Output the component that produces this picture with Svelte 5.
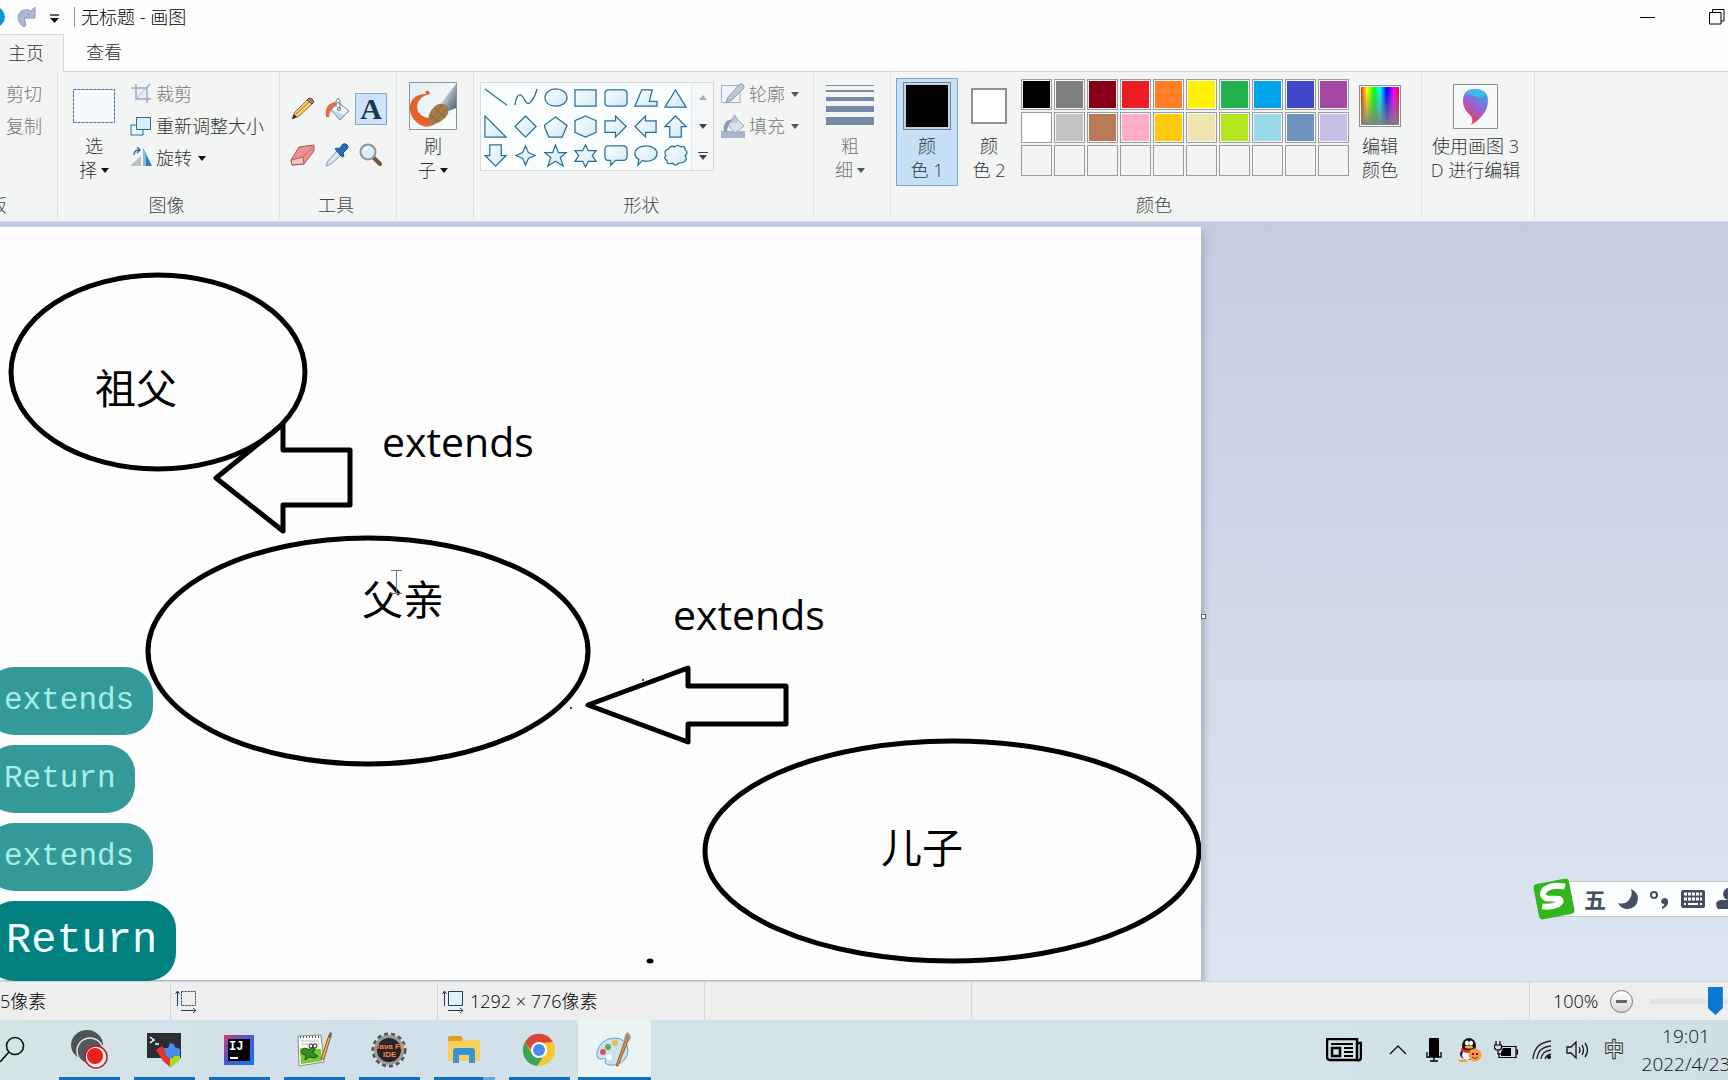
<script>
  let activeTab = $state('主页');
  let activeTool = $state('text');
  let zoom = $state(50);

  const tabs = ['主页', '查看'];

  const palette = [
    '#000000', '#7f7f7f', '#880015', '#ed1c24', '#ff7f27', '#fff200', '#22b14c', '#00a2e8', '#3f48cc', '#a349a4',
    '#ffffff', '#c3c3c3', '#b97a57', '#ffaec9', '#ffc90e', '#efe4b0', '#b5e61d', '#99d9ea', '#7092be', '#c8bfe7',
    '', '', '', '', '', '', '', '', '', ''
  ];

  const shapes = [
    { name: '直线', d: 'M1 3L24 20' },
    { name: '曲线', d: 'M1 20C2 12 5 6 9 11C12 16 14 21 18 16C22 11 23 8 24 3' },
    { name: '椭圆形', d: 'M12 3C19 3 24 7 24 12S19 21 12 21S1 17 1 12S6 3 12 3Z' },
    { name: '矩形', d: 'M1 4H23V21H1Z' },
    { name: '圆角矩形', d: 'M5 4H20Q24 4 24 8V17Q24 21 20 21H5Q1 21 1 17V8Q1 4 5 4Z' },
    { name: '多边形', d: 'M8 4H19L16 16H24V21H1Z' },
    { name: '三角形', d: 'M12 4L23 22H1Z' },
    { name: '直角三角形', d: 'M1 1V23H23Z' },
    { name: '菱形', d: 'M12 1L23 12L12 23L1 12Z' },
    { name: '五边形', d: 'M12 2L24 11L19 23H5L0 11Z' },
    { name: '六边形', d: 'M12 1L23 6V18L12 23L1 18V6Z' },
    { name: '右箭头', d: 'M1 6H12V1L23 12L12 23V18H1Z' },
    { name: '左箭头', d: 'M23 6H12V1L1 12L12 23V18H23Z' },
    { name: '向上箭头', d: 'M12 1L23 12H18V23H6V12H1Z' },
    { name: '向下箭头', d: 'M6 1H18V12H23L12 23L1 12H6Z' },
    { name: '四角星形', d: 'M12 2L15 9L22 12L15 15L12 22L9 15L2 12L9 9Z' },
    { name: '五角星形', d: 'M12 1L15 9H23L17 14L20 23L12 18L4 23L7 14L1 9H9Z' },
    { name: '六角星形', d: 'M12 1L15 7H23L19 12L23 18H15L12 24L9 18H1L5 12L1 7H9Z' },
    { name: '圆角矩形标注', d: 'M4 2H20Q24 2 24 6V13Q24 17 20 17H12L7 22V17H4Q1 17 1 13V6Q1 2 4 2Z' },
    { name: '椭圆形标注', d: 'M13 2C19 2 24 5 24 10S19 18 13 18Q11 18 9 17L4 22L5 16Q1 14 1 10C1 5 6 2 13 2Z' },
    { name: '云形标注', d: 'M5 5Q7 1 11 3Q14 0 17 3Q22 1 22 6Q26 9 22 12Q25 17 20 19Q16 20 15 20Q12 24 9 20Q3 22 3 17Q-1 15 2 12Q-1 6 5 5Z' }
  ];

  const ellipses = [
    { cx: 158, cy: 372, rx: 147, ry: 97 },
    { cx: 368, cy: 651, rx: 220, ry: 113 },
    { cx: 952, cy: 851, rx: 247, ry: 110 }
  ];

  const arrows = [
    'M216 478L283 424V450H350V505H283V531Z',
    'M588 705L688 668V686H786V724H688V742Z'
  ];

  const words = [
    { text: '祖父', x: 95, y: 404 },
    { text: 'extends', x: 382, y: 457 },
    { text: '父亲', x: 362, y: 615 },
    { text: 'extends', x: 673, y: 630 },
    { text: '儿子', x: 881, y: 863 }
  ];

  const keys = ['extends', 'Return', 'extends', 'Return'];
  const apps = ['录屏', '终端', 'IntelliJ IDEA', 'Notepad++', 'JavaFF IDE', '文件资源管理器', 'Chrome', '画图'];
</script>

<div class="window">
  <header class="titlebar">
    <svg class="save" width="5" height="20" viewBox="0 0 5 20"><circle cx="-5" cy="10" r="10" fill="#1492d8" /></svg>
    <button class="plain redo" aria-label="重做">
      <svg width="20" height="22" viewBox="0 0 20 22">
        <path d="M7 21C-1 16 -1 5 8 4Q11 3 14 5L18 1V12H8L12 8Q5 8 9 19Z" fill="#a9b9d4" stroke="#8b9bb8" />
      </svg>
    </button>
    <button class="plain more" aria-label="自定义快速访问工具栏">
      <svg width="11" height="10" viewBox="0 0 11 10"><path d="M1 1H10" stroke="#222" stroke-width="1.4" /><path d="M1 4H10L5.500 9Z" fill="#111" /></svg>
    </button>
    <h1>无标题 - 画图</h1>
    <div class="winbtns">
      <button class="plain" aria-label="最小化">
        <svg width="16" height="16" viewBox="0 0 16 16"><path d="M0 8.500H15" stroke="#000" /></svg>
      </button>
      <button class="plain" aria-label="还原">
        <svg width="16" height="16" viewBox="0 0 16 16" fill="none" stroke="#000"><path d="M.5 3.500H12V15H.5ZM3.500 3V.5H15V12H12" /></svg>
      </button>
    </div>
  </header>

  <nav class="tabs">
    {#each tabs as tab}
      <button class="tab" class:active={activeTab === tab} onclick={() => (activeTab = tab)}>{tab}</button>
    {/each}
  </nav>

  <section class="ribbon">
    <!-- Clipboard, partly off the left edge -->
    <div class="group clipboard">
      <div class="body rows">
        <button class="row off">剪切</button>
        <button class="row off">复制</button>
      </div>
      <div class="label">板</div>
    </div>

    <div class="group image">
      <div class="body">
        <button class="big">
          <span class="pic"><svg width="42" height="34" viewBox="0 0 42 34"><path d="M.5 .5H41.500V33.500H.5Z" fill="#f6faff" stroke="#3f6ea5" stroke-dasharray="3 1" /></svg></span>
          <span>选</span><span>择<i class="caret"></i></span>
        </button>
        <div class="rows">
          <button class="row off">
            <svg width="22" height="22" viewBox="0 0 22 22" fill="none" stroke="#9aaac6"><path d="M1 5H17V20M6 1V16H21M6 16L20 1" stroke-width="1.500" /><path d="M7 6H16V15H7Z" fill="#dfe8f6" stroke="none" opacity=".6" /></svg>
            裁剪
          </button>
          <button class="row">
            <svg width="22" height="22" viewBox="0 0 22 22" stroke="#2b6a94"><path d="M1 10H13V20H1Z" fill="#e3f6fd" /><path d="M6.500 2.500H20.500V14.500H6.500Z" fill="#d5f0fb" /></svg>
            重新调整大小
          </button>
          <button class="row">
            <svg width="22" height="22" viewBox="0 0 22 22"><path d="M0 19H11V9Z" fill="#bcbfc2" /><path d="M13 1V19H22Z" fill="#2d7db8" /><path d="M13 1V19H16V8Z" fill="#7dbbe0" /><path d="M4 8Q4 3 9 3M7 0L10 3L7 6" fill="none" stroke="#2f75ae" stroke-width="1.500" /></svg>
            旋转<i class="caret"></i>
          </button>
        </div>
      </div>
      <div class="label">图像</div>
    </div>

    <div class="group tools">
      <div class="body toolgrid">
        <button class="tool" class:active={activeTool === 'pencil'} onclick={() => (activeTool = 'pencil')} aria-label="铅笔">
          <svg width="24" height="24" viewBox="0 0 24 24"><path d="M1 22L4 15L17 2L22 6L8 19Z" fill="#f8ce72" stroke="#8a6a35" /><path d="M1 22L3 17L6 20Z" fill="#333" /><path d="M16 3L18 1Q22 1 23 5L21 7Z" fill="#bd7070" stroke="#6b4848" /><path d="M5 17L18 5" stroke="#a4742f" /></svg>
        </button>
        <button class="tool" class:active={activeTool === 'fill'} onclick={() => (activeTool = 'fill')} aria-label="用颜色填充">
          <svg width="26" height="24" viewBox="0 0 26 24"><path d="M2 20Q0 7 11 5L13 9Q6 10 5 20Z" fill="#e56b41" /><path d="M14 5L25 14L16 23L7 13Z" fill="#b9d5ef" stroke="#7690ae" /><path d="M14 6L24 14L20 18Q13 15 8 13Z" fill="#eef6fd" /><path d="M12 10V4Q14 -1 16 4V11" fill="none" stroke="#777" /><circle cx="15" cy="12" r="1.500" fill="#fff" stroke="#666" /></svg>
        </button>
        <button class="tool letter" class:active={activeTool === 'text'} onclick={() => (activeTool = 'text')} aria-label="文本">A</button>
        <button class="tool" class:active={activeTool === 'eraser'} onclick={() => (activeTool = 'eraser')} aria-label="橡皮擦">
          <svg width="26" height="24" viewBox="0 0 26 24"><path d="M1 17L9 4L24 2L24 8L14 21L2 22Z" fill="#ee8f91" stroke="#a9585c" /><path d="M1 17L13 14L14 21L2 22Z" fill="#f9c3b8" stroke="#a9585c" /><path d="M13 14L24 3" stroke="#c0696d" /></svg>
        </button>
        <button class="tool" class:active={activeTool === 'picker'} onclick={() => (activeTool = 'picker')} aria-label="颜色选取器">
          <svg width="24" height="24" viewBox="0 0 24 24"><path d="M1 23L3 18L12 8L16 12L6 21Z" fill="#d8e7f2" stroke="#8294a5" /><path d="M10 6L12 5L14 6L18 1Q23 0 23 5L18 10L19 13L17 14Z" fill="#2370b8" stroke="#195187" /></svg>
        </button>
        <button class="tool" class:active={activeTool === 'zoom'} onclick={() => (activeTool = 'zoom')} aria-label="放大镜">
          <svg width="24" height="24" viewBox="0 0 24 24"><path d="M14 14L21 21" stroke="#7a5638" stroke-width="4" stroke-linecap="round" /><circle cx="9" cy="9" r="7.500" fill="#dceefd" stroke="#8f9499" stroke-width="2" /><path d="M5 8Q6 5 9 5" stroke="#fff" stroke-width="2" fill="none" /></svg>
        </button>
      </div>
      <div class="label">工具</div>
    </div>

    <div class="group narrow">
      <div class="body">
        <button class="big">
          <span class="pic">
            <svg width="48" height="48" viewBox="0 0 48 48">
              <defs>
                <linearGradient id="paper" x1="0" y1="0" x2="1" y2="1"><stop offset="0" stop-color="#e3eef4" /><stop offset="1" stop-color="#fbfdfd" /></linearGradient>
                <linearGradient id="metal" x1="0" y1="0" x2="1" y2="1"><stop offset=".2" stop-color="#f4f7f9" /><stop offset=".6" stop-color="#8b9cac" /><stop offset="1" stop-color="#4d5f72" /></linearGradient>
              </defs>
              <path d="M.5 .5H47.500V47.500H.5Z" fill="url(#paper)" stroke="#8f9599" />
              <path d="M47 2L32 21L40 29L47 26Z" fill="url(#metal)" />
              <path d="M20 9Q15 8 17 12Q3 12 1 24Q0 38 14 44Q20 46 26 42Q27 36 20 36Q8 34 8 24Q10 14 21 12Z" fill="#e8602a" />
              <path d="M20 43Q17 32 26 24Q32 19 38 24Q42 30 36 36Q30 42 20 43Z" fill="#a87a48" />
              <path d="M22 38L33 23M26 40L38 26M20 33L30 40M25 26L36 35" stroke="#7e5a34" stroke-width=".7" />
            </svg>
          </span>
          <span>刷</span><span>子<i class="caret"></i></span>
        </button>
      </div>
      <div class="label"></div>
    </div>

    <div class="group shapes">
      <div class="body">
        <div class="gallery">
          <div class="cells">
            {#each shapes as shape}
              <button class="plain" aria-label={shape.name}>
                <svg width="24" height="24" viewBox="0 0 25 25"><path d={shape.d} fill={shape.d.endsWith('Z') ? 'url(#ice)' : 'none'} stroke="#2c6f95" stroke-width="1.300" /></svg>
              </button>
            {/each}
          </div>
          <div class="scroll">
            <button class="plain" aria-label="向上滚动"><svg width="8" height="5" viewBox="0 0 8 5"><path d="M0 5H8L4 0Z" fill="#a9aeb8" /></svg></button>
            <button class="plain" aria-label="向下滚动"><svg width="8" height="5" viewBox="0 0 8 5"><path d="M0 0H8L4 5Z" fill="#3d4457" /></svg></button>
            <button class="plain" aria-label="其他形状"><svg width="10" height="8" viewBox="0 0 10 8"><path d="M0 0H10V1H0ZM1 3H9L5 8Z" fill="#3d4457" /></svg></button>
          </div>
        </div>
        <div class="rows">
          <button class="row off">
            <svg width="24" height="22" viewBox="0 0 24 22"><path d="M.5 2.500H19V19.500H.5Z" fill="#f2f5fb" stroke="#a6aec2" /><path d="M5 20L7 14L19 1Q23 0 23 5L11 17Z" fill="#bcc8de" stroke="#8d9ab5" /></svg>
            轮廓<i class="caret"></i>
          </button>
          <button class="row off">
            <svg width="24" height="24" viewBox="0 0 24 24"><path d="M0 17H24V24H0Z" fill="#a8b4cc" /><path d="M3 18Q1 7 11 5L12 9Q6 10 6 18Z" fill="#8c9ab6" /><path d="M14 3L23 12L14 19L7 11Z" fill="#dae2f0" stroke="#94a2bd" /><path d="M12 9V3Q14 -1 15 3V9" fill="none" stroke="#94a2bd" /></svg>
            填充<i class="caret"></i>
          </button>
        </div>
      </div>
      <div class="label">形状</div>
    </div>

    <div class="group narrow">
      <div class="body">
        <button class="big off">
          <span class="pic"><svg width="48" height="44" viewBox="0 0 48 44"><path d="M0 1H48V2H0ZM0 6H48V8H0ZM0 13H48V17H0ZM0 22H48V28H0ZM0 33H48V41H0Z" fill="#768ba8" /></svg></span>
          <span>粗</span><span>细<i class="caret"></i></span>
        </button>
      </div>
      <div class="label"></div>
    </div>

    <div class="group colors">
      <div class="body">
        <button class="big chosen">
          <span class="pic"><span class="swatch one"></span></span>
          <span>颜</span><span>色 1</span>
        </button>
        <button class="big">
          <span class="pic"><span class="swatch two"></span></span>
          <span>颜</span><span>色 2</span>
        </button>
        <div class="palette">
          {#each palette as color, i}
            <button class="chip" class:empty={!color} style:background-color={color || null} aria-label="颜色 {i + 1}"></button>
          {/each}
        </div>
        <button class="big edit">
          <span class="pic"><span class="spectrum"></span></span>
          <span>编辑</span><span>颜色</span>
        </button>
      </div>
      <div class="label">颜色</div>
    </div>

    <div class="group paint3d">
      <div class="body">
        <button class="big">
          <span class="pic">
            <svg width="45" height="45" viewBox="0 0 45 45">
              <path d="M.5 .5H44.500V44.500H.5Z" fill="#f7f8f9" stroke="#8c9094" />
              <path d="M18 41Q21 35 17 31Q10 25 10 17Q10 5 22 5Q35 5 35 17Q35 25 29 32Q24 38 18 41Z" fill="url(#drop)" />
              <path d="M12 12Q15 5 22 5Q30 5 33 11Q27 16 21 12Q16 9 12 12Z" fill="#35c9ee" opacity=".8" />
            </svg>
          </span>
          <span>使用画图 3</span><span>D 进行编辑</span>
        </button>
      </div>
      <div class="label"></div>
    </div>
  </section>

  <main class="workspace">
    <svg class="canvas" width="1201" height="753" viewBox="0 227 1201 753">
      <defs>
        <linearGradient id="ice" x1="0" y1="0" x2="1" y2="1"><stop offset="0" stop-color="#fbfeff" /><stop offset="1" stop-color="#cfe9f5" /></linearGradient>
        <linearGradient id="drop" x1="0" y1="1" x2=".6" y2="0">
          <stop offset="0" stop-color="#f7b733" /><stop offset=".25" stop-color="#e2425c" /><stop offset=".55" stop-color="#a45bd0" /><stop offset="1" stop-color="#3f9be8" />
        </linearGradient>
      </defs>
      <g fill="none" stroke="#000" stroke-width="5">
        {#each ellipses as e}
          <ellipse cx={e.cx} cy={e.cy} rx={e.rx} ry={e.ry} />
        {/each}
        {#each arrows as d}
          <path {d} stroke-linejoin="round" />
        {/each}
      </g>
      {#each words as word}
        <text x={word.x} y={word.y}>{word.text}</text>
      {/each}
      <ellipse cx="650" cy="961" rx="3.500" ry="2.500" />
      <path d="M570 707h2v2h-2zM642 679h2v2h-2z" fill="#444" />
      <path d="M391 570.500H402M391 593.500H402M396.500 570V594" stroke="#777" fill="none" />
    </svg>
    <span class="handle"></span>

    <div class="keys">
      {#each keys as key, i}
        <span class="key" class:latest={i === keys.length - 1}>{key}</span>
      {/each}
    </div>

    <div class="ime">
      <svg class="sogou" width="44" height="44" viewBox="0 0 44 44">
        <g transform="rotate(-11 22 22)"><rect x="4" y="4" width="36" height="36" rx="4" fill="#33b51e" /><path d="M35 12Q24 7 15 11Q9 16 15 20L27 23Q30 26 25 28Q17 30 9 27" fill="none" stroke="#fff" stroke-width="6" /></g>
      </svg>
      <button class="plain wubi">五</button>
      <button class="plain" aria-label="半角"><svg width="22" height="22" viewBox="0 0 22 22"><path d="M14 1Q21 4 21 11Q20 20 11 21Q4 21 1 15Q8 17 12 12Q16 7 14 1Z" fill="#454f63" /></svg></button>
      <button class="plain" aria-label="中文标点"><svg width="20" height="22" viewBox="0 0 20 22"><circle cx="4" cy="7" r="3" fill="none" stroke="#454f63" stroke-width="2" /><path d="M15 10Q19 11 18 15Q17 19 12 21V19Q15 17 14 16Q11 16 11 13Q12 10 15 10Z" fill="#454f63" /></svg></button>
      <button class="plain" aria-label="软键盘"><svg width="24" height="18" viewBox="0 0 24 18"><rect width="24" height="18" rx="2" fill="#454f63" /><path d="M3 4H21M3 9H21" stroke="#fff" stroke-width="3" stroke-dasharray="3 1" /><path d="M3 14H5M7 14H17M19 14H21" stroke="#fff" stroke-width="2" /></svg></button>
      <button class="plain" aria-label="账户"><svg width="24" height="22" viewBox="0 0 24 22"><circle cx="13" cy="6" r="6" fill="#454f63" /><path d="M0 15Q3 11 8 12L22 12V21H2Q0 19 0 15Z" fill="#454f63" /></svg></button>
    </div>
  </main>

  <footer class="status">
    <div class="cell cursor">5像素</div>
    <div class="cell selection">
      <svg width="22" height="26" viewBox="0 0 22 26" fill="none" stroke="#24415f"><path d="M6.500 3.500H20.500V17.500H6.500Z" stroke-dasharray="2 1" /><path d="M2.500 18V3M.5 6L2.500 3L4.500 6M6 22.500H21M18 20L21 22.500L18 25" /></svg>
    </div>
    <div class="cell size">
      <svg width="22" height="26" viewBox="0 0 22 26" fill="none" stroke="#24415f"><path d="M6.500 3.500H20.500V17.500H6.500Z" fill="#e0f3fb" /><path d="M2.500 18V3M.5 6L2.500 3L4.500 6M6 22.500H21M18 20L21 22.500L18 25" /></svg>
      1292 × 776像素
    </div>
    <div class="cell disk"></div>
    <div class="cell spare"></div>
    <div class="cell zoom">
      <label for="zoom">100%</label>
      <button class="minus" aria-label="缩小" onclick={() => (zoom -= 10)}></button>
      <input id="zoom" type="range" min="0" max="100" bind:value={zoom} />
    </div>
  </footer>

  <div class="taskbar">
    <button class="plain search" aria-label="搜索">
      <svg width="26" height="28" viewBox="0 0 26 28" fill="none" stroke="#111" stroke-width="1.600"><circle cx="15" cy="10" r="8.500" /><path d="M9 16L0 26" /></svg>
    </button>
    {#each apps as app, i}
      <button class="app" class:current={i === 7} class:multi={i === 5} aria-label={app}>
        {#if i === 0}
          <svg width="38" height="46" viewBox="0 0 38 46"><ellipse cx="17" cy="18" rx="16" ry="15" fill="#4f5357" /><circle cx="20" cy="24" r="13" fill="#55595d" stroke="#e3e6e8" stroke-width="1.500" /><circle cx="26" cy="30" r="11" fill="#f5eeee" stroke="#b3202a" stroke-width="1.500" /><circle cx="25" cy="29" r="8" fill="#e9201f" /></svg>
        {:else if i === 1}
          <svg width="36" height="36" viewBox="0 0 36 36"><path d="M1 1H35V26H1Z" fill="#2b2d31" /><path d="M4 5L8 8L4 11M9 12H13" stroke="#fff" stroke-width="1.500" fill="none" /><path d="M10 18L16 14L20 19L25 24L24 35L17 29Z" fill="#e5342f" /><path d="M18 16L22 16L24 11L28 12L29 15L34 17V24L27 24L24 27L20 23Z" fill="#4b8bea" /><path d="M24 27L28 24L34 24V28L24 36Z" fill="#a5dd27" /></svg>
        {:else if i === 2}
          <svg width="30" height="30" viewBox="0 0 30 30"><defs><linearGradient id="ij" x1="0" x2="1" y2="1"><stop offset="0" stop-color="#d83a75" /><stop offset=".4" stop-color="#5b52c9" /><stop offset="1" stop-color="#087cf5" /></linearGradient></defs><path d="M0 0H30V30H0Z" fill="url(#ij)" /><path d="M4 4H26V26H4Z" fill="#000" /><text class="ij" x="5" y="15">IJ</text><path d="M6 22H14V24H6Z" fill="#fff" /></svg>
        {:else if i === 3}
          <svg width="36" height="36" viewBox="0 0 36 36"><path d="M2 4L25 3L28 30L3 34Z" fill="#fbfbf6" stroke="#8c8c84" /><path d="M4 5H24" stroke="#555" stroke-width="2" stroke-dasharray="1 2" /><path d="M5 9H23M5 12H23" stroke="#bbb" /><path d="M4 16L25 17L26 29L5 32Z" fill="#79c934" /><path d="M5 19Q8 14 13 18L16 15L19 17L17 21L22 24L19 26L13 25L9 28L10 23Q5 23 5 19Z" fill="#3a8f24" stroke="#195c14" /><circle cx="15" cy="14" r="2" fill="#fff" stroke="#222" /><circle cx="19" cy="14" r="2" fill="#fff" stroke="#222" /><path d="M25 27L33 3L35 4L28 27Z" fill="#e9b94b" stroke="#80602a" /><path d="M32 5L34 0L36 1L35 6Z" fill="#7d5e55" /></svg>
        {:else if i === 4}
          <svg width="36" height="36" viewBox="0 0 36 36"><circle cx="18" cy="18" r="16" fill="none" stroke="#555" stroke-width="3" stroke-dasharray="4 3" /><circle cx="18" cy="18" r="13.500" fill="#28222a" stroke="#999" stroke-width="3" /><text class="ff" x="4" y="17">Java FF</text><text class="ff" x="12" y="25">IDE</text></svg>
        {:else if i === 5}
          <svg width="34" height="30" viewBox="0 0 34 30"><path d="M1 3Q1 1 3 1H14L17 5H31Q33 5 33 7V26H1Z" fill="#f8cf58" /><path d="M1 3Q1 1 3 1H14L16 4L14 6H1Z" fill="#d8a02b" /><path d="M6 28V16Q6 13 9 13H25Q28 13 28 16V28H22V20H12V28Z" fill="#3793d7" /></svg>
        {:else if i === 6}
          <svg width="34" height="34" viewBox="0 0 34 34"><circle cx="17" cy="17" r="16" fill="#f5c934" /><path d="M3 9A16 16 0 0 1 31 9L17 10L11 20Z" fill="#d8453b" /><path d="M3 9A16 16 0 0 0 15 33L23 21L10 21Z" fill="#3ca55b" /><circle cx="17" cy="17" r="8" fill="#fff" /><circle cx="17" cy="17" r="6" fill="#4b88ee" /></svg>
        {:else}
          <svg width="36" height="36" viewBox="0 0 36 36"><path d="M18 6Q31 6 32 18Q31 31 18 33Q9 34 9 29Q12 25 6 27Q0 28 1 20Q4 7 18 6Z" fill="#c9e3f2" stroke="#6d9dc0" /><circle cx="7" cy="20" r="3" fill="#d9534a" /><circle cx="12" cy="15" r="3" fill="#64ad4c" /><circle cx="19" cy="11" r="3" fill="#efc13d" /><circle cx="13" cy="25" r="3" fill="#fff" /><path d="M20 34L29 8L32 9L22 34Z" fill="#d69150" stroke="#9a6335" /><path d="M28 9Q28 4 31 0Q36 3 34 8L31 11Z" fill="#b08c72" /></svg>
        {/if}
      </button>
    {/each}

    <div class="tray">
      <button class="plain news" aria-label="资讯">
        <svg width="36" height="24" viewBox="0 0 36 24" fill="none" stroke="#000" stroke-width="2.500"><path d="M31 5H35V20Q34 23 31 22H4Q1 22 1 19V1H31V22" /><path d="M6 10H14V18H6Z" /><path d="M5 6H27M18 10H27M18 14H27M18 18H27" stroke-width="2" /></svg>
      </button>
      <button class="plain" aria-label="显示隐藏的图标"><svg width="18" height="10" viewBox="0 0 18 10"><path d="M1 9L9 1L17 9" fill="none" stroke="#111" stroke-width="1.400" /></svg></button>
      <button class="plain" aria-label="麦克风"><svg width="16" height="24" viewBox="0 0 16 24"><rect x="3" y="0" width="10" height="19" rx="1" /><path d="M1 14V19H15V14M8 19V23M4 23H12" fill="none" stroke="#000" stroke-width="1.300" /></svg></button>
      <button class="plain" aria-label="QQ">
        <svg width="24" height="24" viewBox="0 0 24 24"><ellipse cx="11" cy="8" rx="7" ry="8" fill="#151515" /><ellipse cx="10" cy="16" rx="8" ry="6" fill="#151515" /><ellipse cx="9" cy="17" rx="5" ry="5" fill="#fff" /><path d="M3 10Q10 14 18 10V13Q10 17 3 13Z" fill="#e12b2b" /><ellipse cx="9" cy="5" rx="2" ry="2.500" fill="#fff" /><ellipse cx="13" cy="5" rx="2" ry="2.500" fill="#fff" /><ellipse cx="11" cy="9" rx="4" ry="1.500" fill="#f8b42c" /><path d="M1 22H9V24H1Z" fill="#f2a325" /><circle cx="17" cy="17" r="6.500" fill="#ff9a3c" /><circle cx="15" cy="16" r="1" /><circle cx="19" cy="16" r="1" /><path d="M14 19Q17 22 20 19" fill="none" stroke="#7d3b0b" /></svg>
      </button>
      <button class="plain" aria-label="电池"><svg width="24" height="18" viewBox="0 0 24 18"><path d="M7 5.500H22V16.500H5V12M22 9H23.500V13H22" fill="none" stroke="#000" stroke-width="1.200" /><path d="M9 7H17V15H7V11Z" /><path d="M2 0V4M6 0V4M.5 4H7.500V7Q7 9 4 9Q1 9 .5 7ZM4 9V13H7" fill="none" stroke="#000" stroke-width="1.200" /></svg></button>
      <button class="plain" aria-label="网络"><svg width="20" height="20" viewBox="0 0 20 20" fill="none" stroke="#222" stroke-width="1.300"><path d="M1 19Q2 3 19 1M5 19Q6 7 19 6M9 19Q10 11 19 10M13 19Q14 15 19 14" /><circle cx="17" cy="17" r="1.500" fill="#000" /></svg></button>
      <button class="plain" aria-label="音量"><svg width="24" height="20" viewBox="0 0 24 20" fill="none" stroke="#111" stroke-width="1.300"><path d="M1 7H5L10 2V18L5 13H1ZM13 7Q15 10 13 13M16 5Q19 10 16 15M19 3Q24 10 19 17" /></svg></button>
      <button class="plain lang">中</button>
      <button class="plain clock"><span>19:01</span><span>2022/4/23</span></button>
    </div>
  </div>
</div>

<style>
  :global(body) {
    margin: 0;
    overflow: hidden;
  }

  .window {
    display: flex;
    flex-direction: column;
    height: 100vh;
    overflow: hidden;
    background: #fdfdfd;
    color: #333;
    font: 300 18px/24px 'Open Sans', 'Noto Sans CJK SC', sans-serif;
  }

  button {
    box-sizing: border-box;
    margin: 0;
    padding: 0;
    border: 0;
    background: none;
    color: inherit;
    font: inherit;
  }

  svg {
    display: block;
    flex: none;
  }

  .plain {
    display: flex;
    align-items: center;
    justify-content: center;
  }

  /* Title bar */
  .titlebar {
    display: flex;
    align-items: center;
    flex: none;
    height: 34px;
  }

  .redo {
    margin-left: 12px;
  }

  .more {
    margin: 4px 14px 0 12px;
  }

  h1 {
    margin: 0;
    padding-left: 6px;
    border-left: 1px solid #999;
    color: #000;
    font-size: 18px;
    font-weight: 300;
    line-height: 20px;
  }

  .winbtns {
    display: flex;
    gap: 53px;
    margin-left: auto;
    padding-right: 3px;
  }

  /* Tabs */
  .tabs {
    display: flex;
    flex: none;
    height: 37px;
    border-bottom: 1px solid #d3d9d8;
  }

  .tab {
    height: 37px;
    padding: 0 20px 2px 22px;
    border: solid transparent;
    border-width: 1px 1px 0 0;
  }

  .tab:first-child {
    padding-left: 8px;
    padding-right: 19px;
  }

  .tab.active {
    height: 38px;
    border-color: #d3d9d8;
    background: #f2f5f4;
  }

  /* Ribbon */
  .ribbon {
    display: flex;
    flex: none;
    height: 149px;
    border-bottom: 1px solid #d5dae0;
    background: #f2f5f4;
    overflow: hidden;
  }

  .group {
    box-sizing: border-box;
    display: flex;
    flex-direction: column;
    flex: none;
    margin-bottom: 2px;
    padding: 6px 0 2px;
    border-right: 1px solid #dfe3e3;
  }

  .body {
    display: flex;
    flex: 1;
    align-items: flex-start;
  }

  .label {
    height: 24px;
    padding-right: 4px;
    text-align: center;
    color: #444;
  }

  .rows,
  .body.rows {
    display: flex;
    flex-direction: column;
    align-items: flex-start;
  }

  .row {
    display: flex;
    align-items: center;
    gap: 4px;
    height: 32px;
    white-space: nowrap;
  }

  .off {
    color: #777;
  }

  .caret {
    display: inline-block;
    margin-left: 4px;
    border: solid transparent;
    border-width: 5px 4px 0;
    border-top-color: #111;
    vertical-align: 4px;
  }

  .row .caret {
    margin-left: 2px;
  }

  .off .caret {
    border-top-color: #555;
  }

  .big {
    display: flex;
    flex-direction: column;
    align-items: center;
    height: 108px;
    padding: 4px 0 0;
    white-space: nowrap;
  }

  .pic {
    display: flex;
    align-items: center;
    justify-content: center;
    height: 48px;
    margin-bottom: 4px;
  }

  .clipboard {
    width: 58px;
  }

  .clipboard .body {
    padding-left: 6px;
  }

  .clipboard .label {
    display: flex;
    justify-content: flex-end;
    width: 7px;
    padding: 0;
  }

  .image {
    width: 222px;
  }

  .image .body {
    gap: 15px;
    padding-left: 15px;
  }

  .tools {
    width: 117px;
  }

  .toolgrid {
    display: grid;
    grid-template-columns: repeat(3, 34px);
    grid-template-rows: repeat(2, 46px);
    justify-content: center;
    align-content: start;
    align-items: center;
    padding-top: 8px;
  }

  .tool {
    display: flex;
    align-items: center;
    justify-content: center;
    width: 32px;
    height: 32px;
    border: 1px solid transparent;
  }

  .tool.active {
    border-color: #79a9d5;
    background: #cce3f8;
  }

  .letter {
    color: #1d3357;
    font: bold 30px/30px 'Liberation Serif', serif;
  }

  .narrow {
    width: 77px;
  }

  .narrow .body {
    justify-content: center;
    padding-right: 4px;
  }

  .shapes {
    width: 340px;
  }

  .shapes .body {
    gap: 7px;
    padding-left: 6px;
  }

  .gallery {
    display: flex;
    margin-top: 4px;
    border: 1px solid #d4dadd;
    background: #fafdfe;
  }

  .cells {
    display: grid;
    grid-template-columns: repeat(7, 30px);
    grid-auto-rows: 29px;
  }

  .scroll {
    display: grid;
    grid-template-rows: repeat(3, 29px);
    width: 21px;
    border-left: 1px solid #e2e6e8;
    background: #f5f7f8;
  }

  .colors {
    width: 531px;
  }

  .colors .body {
    padding-left: 5px;
  }

  .colors .big {
    width: 62px;
  }

  .big.chosen {
    padding-top: 3px;
    border: 1px solid #75a9d3;
    background: #c6e0f7;
  }

  .swatch {
    box-sizing: border-box;
    border: 2px solid #8d9296;
    background: #fff;
  }

  .one {
    width: 48px;
    height: 48px;
    border-width: 1px;
    border-color: #6f8496;
    background: #000;
    box-shadow: inset 0 0 0 2px #c2d3e2;
  }

  .two {
    width: 36px;
    height: 36px;
  }

  .palette {
    display: grid;
    grid-template-columns: repeat(10, 31px);
    grid-auto-rows: 31px;
    gap: 2px;
    margin: 1px 0 0 1px;
  }

  .chip {
    border: 1px solid #9a9da0;
    box-shadow: inset 0 0 0 1px #f8f8f8;
  }

  .chip.empty {
    box-shadow: none;
  }

  .spectrum {
    width: 40px;
    height: 40px;
    border: 1px solid #8d9296;
    box-shadow: inset 0 0 0 1px #fff;
    background:
      linear-gradient(transparent 10%, #808080),
      linear-gradient(90deg, #f00, #ff0 17%, #0f0 35%, #0ff 50%, #00f 67%, #f0f 85%, #f00);
  }

  .paint3d {
    width: 113px;
  }

  .paint3d .body {
    justify-content: center;
    padding-right: 5px;
  }

  /* Drawing area */
  .workspace {
    position: relative;
    flex: 1;
    min-height: 0;
    padding-top: 5px;
    overflow: hidden;
    background: linear-gradient(#c4cde0, #dce6f1);
  }

  .canvas {
    background: #fdfdfd;
    box-shadow: 4px 4px 6px #a9b4c8;
  }

  .canvas text {
    fill: #000;
    font-size: 41px;
    font-weight: 400;
  }

  .handle {
    position: absolute;
    top: 392px;
    left: 1201px;
    width: 3px;
    height: 3px;
    border: 1px solid #666;
    background: #fff;
  }

  .keys {
    position: absolute;
    left: -14px;
    bottom: 0;
    display: flex;
    flex-direction: column;
    align-items: flex-start;
    gap: 10px;
  }

  .key {
    padding: 0 19px 0 18px;
    border-radius: 28px;
    background: #339999;
    color: #a6efe6;
    font: 31px/68px 'Liberation Mono', monospace;
  }

  .key.latest {
    padding: 0 19px 0 20px;
    background: #008080;
    color: #f0ffff;
    font-size: 42px;
    line-height: 80px;
  }

  .ime {
    position: absolute;
    right: -13px;
    bottom: 64px;
    display: flex;
    align-items: center;
    gap: 11px;
    height: 34px;
    border: 1px solid #c0c8cf;
    background: #fdfefe;
  }

  .sogou {
    margin: 0 -3px 0 -26px;
  }

  .wubi {
    color: #454f63;
    font-size: 22px;
    font-weight: 700;
  }

  /* Status bar */
  .status {
    display: flex;
    flex: none;
    height: 38px;
    border-top: 1px solid #d2d5d6;
    background: #eeeeee;
    color: #000;
    overflow: hidden;
  }

  .cell {
    box-sizing: border-box;
    display: flex;
    align-items: center;
    flex: none;
    gap: 6px;
    width: 267px;
    padding-left: 4px;
    border-right: 1px solid #d5d5d5;
    white-space: nowrap;
  }

  .cursor {
    width: 171px;
    padding-left: 0;
  }

  .spare {
    flex: 1;
  }

  .zoom {
    gap: 12px;
    width: 198px;
    padding-left: 23px;
    border: 0;
  }

  .minus {
    flex: none;
    width: 23px;
    height: 23px;
    border: 1px solid #777;
    border-radius: 50%;
    background: linear-gradient(#666, #666) center / 11px 3px no-repeat, linear-gradient(#fff, #d8d8d8);
  }

  input {
    appearance: none;
    flex: none;
    width: 130px;
    height: 28px;
    margin: 0 0 0 5px;
    background: linear-gradient(#e0e4e4, #e0e4e4) center / 100% 5px no-repeat;
  }

  input::-webkit-slider-thumb {
    appearance: none;
    width: 15px;
    height: 28px;
    background: #0b78d4;
    clip-path: polygon(0 0, 100% 0, 100% 75%, 50% 100%, 0 75%);
  }

  /* Taskbar */
  .taskbar {
    display: flex;
    flex: none;
    height: 60px;
    background: linear-gradient(90deg, #d3e5e7, #d1dfe9 20%, #d2e4e8 45%, #d4e2ea 70%, #cfdfe5);
    overflow: hidden;
  }

  .search {
    width: 53px;
    justify-content: flex-start;
  }

  .app {
    position: relative;
    display: flex;
    align-items: center;
    justify-content: center;
    flex: none;
    width: 73px;
    margin-right: 2px;
    padding-right: 2px;
  }

  .app::after {
    content: '';
    position: absolute;
    right: 6px;
    bottom: 0;
    left: 6px;
    height: 3px;
    background: #0f70c0;
  }

  .app.multi::after {
    background: linear-gradient(90deg, #0f70c0 80%, #68a7d8 80%);
  }

  .app.current {
    background: #eaf4f5;
  }

  .app.current::after {
    right: 0;
    left: 0;
  }

  .ij {
    fill: #fff;
    font: bold 12px 'Liberation Mono', monospace;
  }

  .ff {
    fill: #f08a35;
    font: bold 8px 'Liberation Sans', sans-serif;
  }

  .tray {
    display: flex;
    margin: 0 -12px 0 auto;
    color: #111;
  }

  .tray button {
    width: 36px;
  }

  .tray .news {
    margin-right: 18px;
  }

  .lang {
    color: #e4edf0;
    font-size: 20px;
    font-weight: 700;
    -webkit-text-stroke: 1px #333;
  }

  .tray .clock {
    flex-direction: column;
    gap: 4px;
    width: 108px;
    font-size: 19px;
  }
</style>
